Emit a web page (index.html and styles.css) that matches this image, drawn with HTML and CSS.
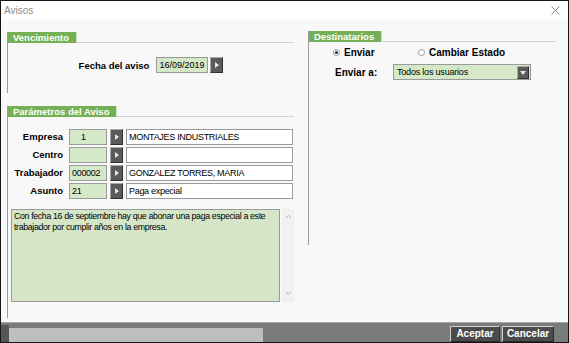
FILE: index.html
```html
<!DOCTYPE html>
<html lang="es">
<head>
<meta charset="utf-8">
<title>Avisos</title>
<link rel="stylesheet" href="styles.css">
</head>
<body>
<div class="window">
  <div class="titlebar">
    <span class="title">Avisos</span>
    <svg class="close" width="9" height="9" viewBox="0 0 9 9"><path d="M0.5 0.5 L8.5 8.5 M8.5 0.5 L0.5 8.5" stroke="#8a8a8a" stroke-width="1" fill="none"/></svg>
  </div>
  <div class="content">
    <div class="col-left">
      <section class="group venc">
        <div class="ghead"><span class="tab">Vencimiento</span></div>
        <div class="gbody venc-body">
          <div class="fecha-row">
            <span class="lbl">Fecha del aviso</span>
            <span class="field green date">16/09/2019</span>
            <span class="abtn"></span>
          </div>
        </div>
      </section>
      <section class="group params">
        <div class="ghead"><span class="tab">Parámetros del Aviso</span></div>
        <div class="gbody params-body">
          <div class="rows">
            <span class="lbl">Empresa</span>
            <span class="field green code one">1</span>
            <span class="abtn"></span>
            <span class="field white">MONTAJES INDUSTRIALES</span>

            <span class="lbl">Centro</span>
            <span class="field green code"></span>
            <span class="abtn"></span>
            <span class="field white"></span>

            <span class="lbl">Trabajador</span>
            <span class="field green code">000002</span>
            <span class="abtn"></span>
            <span class="field white">GONZALEZ TORRES, MARIA</span>

            <span class="lbl">Asunto</span>
            <span class="field green code">21</span>
            <span class="abtn"></span>
            <span class="field white">Paga expecial</span>
          </div>
          <div class="memo">
            <div class="memo-text">Con fecha 16 de septiembre hay que abonar una paga especial a este trabajador por cumplir años en la empresa.</div>
            <div class="scroll">
              <svg width="7" height="5" viewBox="0 0 7 5"><path d="M1 4 L3.5 1.5 L6 4" stroke="#b0b0b0" fill="none"/></svg>
              <svg width="7" height="5" viewBox="0 0 7 5"><path d="M1 1 L3.5 3.5 L6 1" stroke="#b0b0b0" fill="none"/></svg>
            </div>
          </div>
        </div>
      </section>
    </div>
    <div class="col-right">
      <section class="group dest">
        <div class="ghead"><span class="tab">Destinatarios</span></div>
        <div class="gbody dest-body">
          <div class="radios">
            <span class="radio-opt first"><span class="radio checked"></span>Enviar</span>
            <span class="radio-opt"><span class="radio"></span>Cambiar Estado</span>
          </div>
          <div class="send-row">
            <span class="lbl2">Enviar a:</span>
            <span class="combo">Todos los usuarios<span class="dbtn"></span></span>
          </div>
        </div>
      </section>
    </div>
  </div>
  <div class="bottombar">
    <span class="grip"></span>
    <span class="progress"></span>
    <div class="buttons">
      <button class="btn btn-ok">Aceptar</button>
      <button class="btn btn-cancel">Cancelar</button>
    </div>
  </div>
</div>
</body>
</html>
```
FILE: styles.css
```css
* { box-sizing: border-box; margin: 0; padding: 0; }
html, body { width: 569px; height: 343px; overflow: hidden; }
body {
  font-family: "Liberation Sans", Arial, sans-serif;
  font-size: 9px;
  color: #000;
  background: #fff;
}
.window {
  width: 569px;
  height: 343px;
  border: 1px solid #151515;
  display: flex;
  flex-direction: column;
  background: #f8f8f8;
}
.titlebar {
  height: 19px;
  flex: none;
  background: #fff;
  display: flex;
  align-items: center;
  justify-content: space-between;
  padding: 0 8px 0 3px;
}
.title { font-size: 10px; color: #8c8c8c; }
.close { display: block; }

.content {
  flex: 1;
  display: grid;
  grid-template-columns: 287px 248px;
  column-gap: 14px;
  padding: 11px 0 0 6px;
  align-items: start;
}
.col-left { margin-top: 1px; }

.group { border-left: 1px solid #9c9c9c; }
.ghead { display: flex; height: 11px; }
.ghead::after {
  content: "";
  flex: 1;
  border-bottom: 1px solid #d2d2d2;
}
.tab {
  background: #74b055;
  color: #fff;
  font-weight: bold;
  font-size: 9.5px;
  line-height: 11px;
  padding: 0 7px 0 5px;
  border-right: 1px solid #cfe3c4;
}

.venc-body {
  height: 50px;
  display: flex;
  justify-content: center;
  padding-top: 14px;
}
.fecha-row { display: flex; align-items: center; height: 16px; }
.lbl { font-weight: bold; font-size: 9.5px; text-align: right; }
.fecha-row .lbl { margin-right: 7px; }
.field {
  height: 16px;
  border: 1px solid #9a9a9a;
  line-height: 14px;
  padding: 0 2px;
  white-space: nowrap;
  overflow: hidden;
  letter-spacing: -0.3px;
}
.green { background: #d5e8c7; }
.white { background: #fff; }
.date { width: 52px; letter-spacing: 0; }
.abtn {
  width: 13px;
  height: 16px;
  background: #5a5a5a;
  border: 1px solid;
  border-color: #a8a8a8 #303030 #303030 #a8a8a8;
  position: relative;
  display: block;
}
.abtn::after {
  content: "";
  position: absolute;
  left: 4px;
  top: 4px;
  border-left: 4px solid #e6e6e6;
  border-top: 3px solid transparent;
  border-bottom: 3px solid transparent;
}
.fecha-row .abtn { margin-left: 2px; }

.params { margin-top: 13px; }
.params-body { height: 201px; padding-top: 12px; }
.rows {
  display: grid;
  grid-template-columns: 58px 38px 13px 167px;
  grid-auto-rows: 16px;
  column-gap: 3px;
  row-gap: 2px;
}
.rows .lbl { padding-right: 3px; line-height: 16px; }
.code.one { padding-left: 11px; }

.memo { display: flex; margin-top: 10px; margin-left: 3px; height: 93px; }
.memo-text {
  width: 269px;
  height: 93px;
  background: #d5e6c8;
  border: 1px solid #9a9a9a;
  padding: 1px 1px 1px 2px;
  font-size: 8.8px;
  line-height: 11px;
  letter-spacing: -0.35px;
}
.scroll {
  width: 12px;
  margin-left: 2px;
  background: #f1f1f1;
  display: flex;
  flex-direction: column;
  justify-content: space-between;
  align-items: center;
  padding: 5px 0 6px;
}
.scroll svg { display: block; }

.dest-body { height: 203px; padding: 4px 0 0 24px; }
.radios { display: flex; height: 12px; align-items: center; }
.radio-opt {
  display: flex;
  align-items: center;
  white-space: nowrap;
  font-weight: bold;
  font-size: 10px;
}
.radio-opt.first { width: 85px; }
.radio {
  width: 7px;
  height: 7px;
  border-radius: 50%;
  border: 1px solid #9a9a9a;
  background: #fff;
  margin-right: 4px;
  position: relative;
}
.radio.checked::after {
  content: "";
  position: absolute;
  left: 1px;
  top: 1px;
  width: 3px;
  height: 3px;
  border-radius: 50%;
  background: #222;
}
.send-row { display: flex; align-items: center; margin: 6px 0 0 2px; height: 16px; }
.lbl2 { width: 58px; font-weight: bold; font-size: 10px; }
.combo {
  width: 138px;
  height: 16px;
  background: #d5e8c7;
  border: 1px solid #9a9a9a;
  line-height: 14px;
  padding-left: 3px;
  letter-spacing: -0.2px;
  display: flex;
  justify-content: space-between;
  align-items: center;
}
.dbtn {
  width: 12px;
  height: 13px;
  margin-right: 1px;
  background: #5a5a5a;
  border: 1px solid;
  border-color: #a8a8a8 #303030 #303030 #a8a8a8;
  position: relative;
}
.dbtn::after {
  content: "";
  position: absolute;
  left: 2px;
  top: 4px;
  border-top: 4px solid #e6e6e6;
  border-left: 3px solid transparent;
  border-right: 3px solid transparent;
}

.bottombar {
  height: 20px;
  flex: none;
  background: #7b7b7b;
  border-top: 1px solid #a6a6a6;
  display: flex;
  align-items: flex-end;
  padding-right: 14px;
}
.grip { width: 8px; height: 17px; background: #555; }
.progress { width: 254px; height: 14px; margin-left: 0; background: #bebebe; }
.buttons { margin-left: auto; display: flex; gap: 2px; }
.btn {
  height: 16px;
  background: #4b4b4b;
  border: 1px solid;
  border-color: #d0d0d0 #2a2a2a #2a2a2a #d0d0d0;
  color: #fff;
  font-family: "Liberation Sans", Arial, sans-serif;
  font-weight: bold;
  font-size: 10px;
  line-height: 14px;
  padding: 0;
}
.btn-ok { width: 50px; }
.btn-cancel { width: 52px; }
```
